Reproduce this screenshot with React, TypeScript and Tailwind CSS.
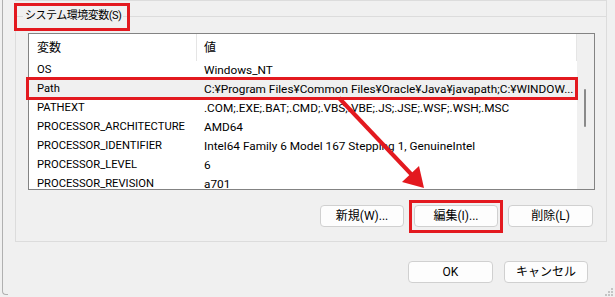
import React from "react";

const rows: { name: string; value: string; selected?: boolean }[] = [
  { name: "OS", value: "Windows_NT" },
  { name: "Path", value: "C:¥Program Files¥Common Files¥Oracle¥Java¥javapath;C:¥WINDOW...", selected: true },
  { name: "PATHEXT", value: ".COM;.EXE;.BAT;.CMD;.VBS;.VBE;.JS;.JSE;.WSF;.WSH;.MSC" },
  { name: "PROCESSOR_ARCHITECTURE", value: "AMD64" },
  { name: "PROCESSOR_IDENTIFIER", value: "Intel64 Family 6 Model 167 Stepping 1, GenuineIntel" },
  { name: "PROCESSOR_LEVEL", value: "6" },
  { name: "PROCESSOR_REVISION", value: "a701" },
];

function Btn({ children, className = "" }: { children: React.ReactNode; className?: string }) {
  return (
    <div
      className={
        "h-[22px] flex items-center justify-center bg-[#fdfdfd] border border-[#d0d0d0] rounded-[4px] text-[12px] text-black " +
        className
      }
    >
      {children}
    </div>
  );
}

export default function App() {
  return (
    <div className="relative w-[615px] h-[297px] bg-[#f0f0f0] overflow-hidden pl-[2px] font-['Roboto','Noto_Sans_CJK_JP',sans-serif] text-black">
      <div className="h-[295px] border-l border-b border-[#b0b0b0] rounded-bl-[4px] w-[6px] absolute left-[2px] top-0" />
      <div className="pl-[13px] flex flex-col">
        {/* previous group bottom edge */}
        <div className="h-[16px] w-[592px] border-t border-r border-[#dcdcdc]" />
        {/* group box */}
        <div className="relative w-[592px] h-[226px] border border-[#dcdcdc] pt-[16px] pl-[12px]">
          <div className="absolute left-[7px] -top-[9px] px-[2px] bg-[#f0f0f0] text-[11px] leading-[16px] tracking-[-0.5px]">
            システム環境変数(S)
          </div>
          <div className="absolute -left-[2px] -top-[14px] w-[116px] h-[28px] border-[3px] border-[#e3191f]" />

          {/* list */}
          <div className="relative w-[567px]">
            <div className="w-[567px] h-[157px] border border-[#838383] bg-white flex overflow-hidden">
              <div className="flex-1 flex flex-col">
                <div className="h-[27px] shrink-0 flex text-[12px]">
                  <div className="w-[168px] pl-[8px] flex items-center border-r border-[#e5e5e5]">変数</div>
                  <div className="flex-1 pl-[7px] flex items-center border-r border-[#e5e5e5]">値</div>
                </div>
                {rows.map((r) => (
                  <div
                    key={r.name}
                    className={
                      "h-[19px] shrink-0 flex items-center whitespace-nowrap " +
                      (r.selected ? "bg-[#f0f0f0]" : "")
                    }
                  >
                    <div className="w-[168px] pl-[8px] overflow-hidden text-[11.2px]">{r.name}</div>
                    <div className="flex-1 pl-[7px] overflow-hidden text-[11.8px]">{r.value}</div>
                  </div>
                ))}
              </div>
              {/* scrollbar */}
              <div className="w-[17px] shrink-0 bg-[#f0f0f0] pt-[55px] pl-[7px]">
                <div className="w-[2px] h-[38px] bg-[#8a8a8a] rounded-full" />
              </div>
            </div>
            <div className="absolute -left-[2px] top-[44px] w-[552px] h-[23px] border-[3px] border-[#e3191f]" />
          </div>

          {/* buttons */}
          <div className="flex justify-end gap-[10px] w-[565px] mt-[15px]">
            <Btn className="w-[84px]">新規(W)...</Btn>
            <div className="relative">
              <Btn className="w-[84px]">編集(I)...</Btn>
              <div className="absolute -left-[5px] -top-[5px] w-[94px] h-[33px] border-[3px] border-[#e3191f]" />
            </div>
            <Btn className="w-[85px]">削除(L)</Btn>
          </div>
        </div>
        {/* dialog buttons */}
        <div className="flex justify-end gap-[11px] w-[573px] mt-[19px]">
          <Btn className="w-[85px]">OK</Btn>
          <Btn className="w-[84px]">キャンセル</Btn>
        </div>
      </div>

      {/* resize grip */}
      <svg className="absolute right-[2px] bottom-[1px]" width="10" height="10" viewBox="0 0 10 10">
        {[
          [8, 0],
          [8, 3],
          [5, 3],
          [8, 6],
          [5, 6],
          [2, 6],
        ].map(([x, y], i) => (
          <rect key={i} x={x} y={y + 2} width="2" height="2" fill="#c4c4c4" />
        ))}
      </svg>

      {/* arrow */}
      <svg className="absolute left-0 top-0 pointer-events-none" width="615" height="297">
        <line x1="339" y1="98" x2="412" y2="175" stroke="#e3191f" strokeWidth="4" />
        <polygon points="424,188 402,182 419,166" fill="#e3191f" />
      </svg>
    </div>
  );
}
